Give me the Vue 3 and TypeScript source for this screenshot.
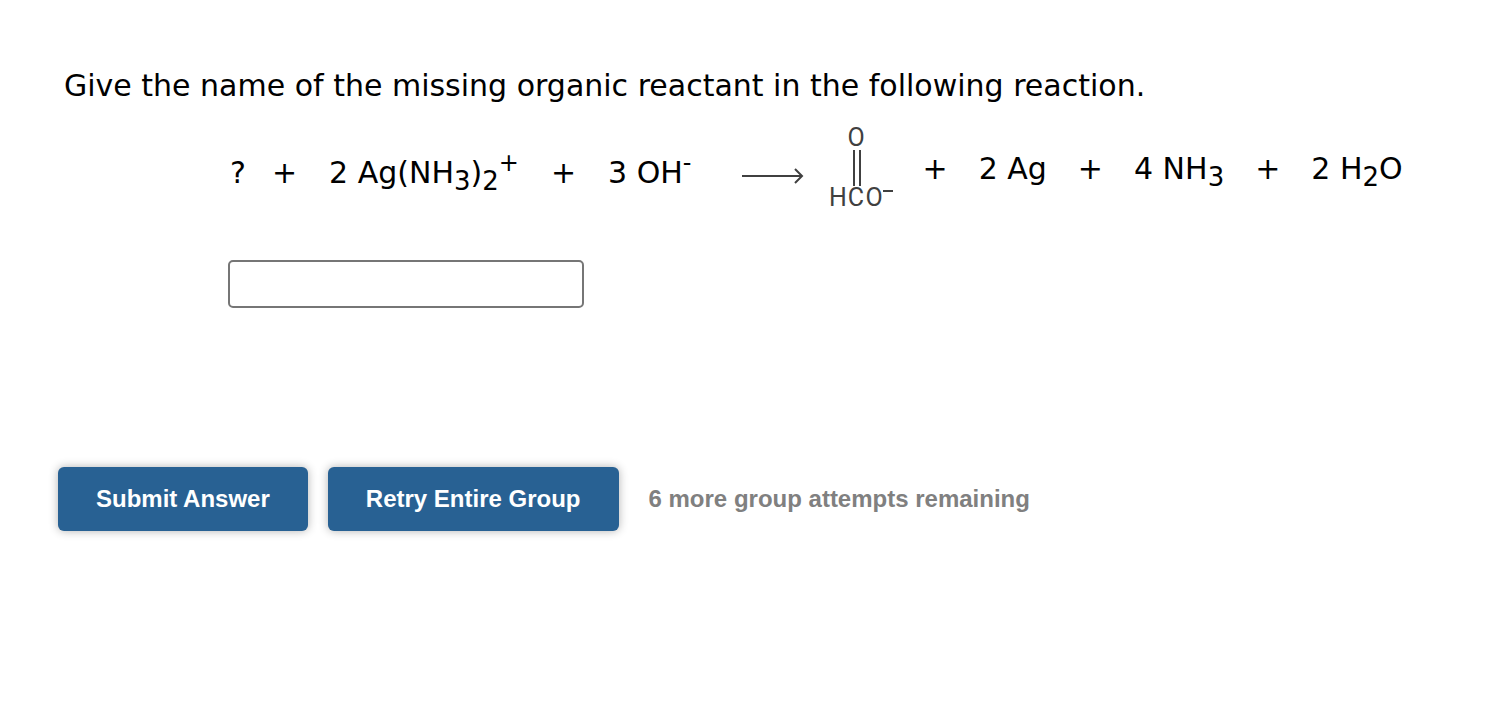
<script setup lang="ts">
import { ref } from 'vue'

const answer = ref('')
const attemptsLeft = ref(6)
</script>

<template>
  <main class="question">
    <p id="prompt" class="prompt">Give the name of the missing organic reactant in the following reaction.</p>

    <div class="equation">
      <div class="side reactants">
        <span class="unknown">?</span>
        <span>+</span>
        <span>2 Ag(NH<sub>3</sub>)<sub>2</sub><sup>+</sup></span>
        <span>+</span>
        <span>3 OH<sup>-</sup></span>
      </div>

      <svg class="arrow" width="62" height="16" viewBox="0 0 62 16" role="img" aria-label="yields">
        <path d="M0 8H60M53 1L60 8L53 15" fill="none" stroke="#404040" stroke-width="2" />
      </svg>

      <svg class="formate" width="66" height="84" viewBox="0 0 66 84" role="img" aria-label="formate ion">
        <g class="atoms">
          <text x="27" y="20">O</text>
          <text x="9" y="80">H</text>
          <text x="27" y="80">C</text>
          <text x="45" y="80">O</text>
        </g>
        <path d="M25 24V60M31 24V60M54 65H64" fill="none" stroke="#404040" stroke-width="2" />
      </svg>

      <div class="side products">
        <span>+</span>
        <span>2 Ag</span>
        <span>+</span>
        <span>4 NH<sub>3</sub></span>
        <span>+</span>
        <span>2 H<sub>2</sub>O</span>
      </div>
    </div>

    <input v-model="answer" class="answer" type="text" aria-labelledby="prompt" />

    <div class="actions">
      <button type="button">Submit Answer</button>
      <button type="button">Retry Entire Group</button>
      <span class="attempts">{{ attemptsLeft }} more group attempts remaining</span>
    </div>
  </main>
</template>

<style>
body {
  margin: 0;
  background: #fff;
}
</style>

<style scoped>
.question {
  padding: 66px 58px 40px 64px;
  font-family: "DejaVu Sans", Verdana, sans-serif;
  font-size: 30px;
  line-height: 40px;
  color: #000;
}

.prompt {
  margin: 0;
}

.equation {
  display: flex;
  align-items: flex-start;
  margin: 20px 0 0 166px;
  white-space: nowrap;
}

.side {
  display: flex;
}

.reactants {
  margin-top: 27px;
  gap: 32px;
}

.unknown {
  margin-right: -6px;
}

.products {
  margin: 23px 0 0 28px;
  gap: 31px;
}

.side sub,
.side sup {
  line-height: 0;
}

.side sub {
  font-size: 26px;
  vertical-align: -7px;
}

.side sup {
  font-size: 24px;
  vertical-align: 12px;
}

.arrow {
  flex: none;
  margin: 42px 25px 0 50px;
}

.formate {
  flex: none;
  overflow: visible;
}

.atoms {
  font-family: Roboto, Arial, sans-serif;
  font-size: 25px;
  text-anchor: middle;
  fill: #404040;
}

.answer {
  display: block;
  box-sizing: border-box;
  width: 356px;
  max-width: 100%;
  height: 48px;
  margin: 50px 0 0 164px;
  padding: 4px 8px;
  border: 2px solid #767676;
  border-radius: 5px;
  background: #fff;
  font: inherit;
}

.actions {
  display: flex;
  align-items: center;
  gap: 20px;
  margin: 159px 0 0 -6px;
  font-family: "Liberation Sans", Arial, sans-serif;
  font-size: 24px;
  font-weight: bold;
}

.actions button {
  padding: 12px 38px;
  border: 0;
  border-radius: 6px;
  background: #286193;
  box-shadow: 0 0 10px rgba(0, 0, 0, 0.3);
  color: #fff;
  font: inherit;
  line-height: 40px;
  cursor: pointer;
}

.attempts {
  margin-left: 10px;
  color: #808080;
}
</style>
